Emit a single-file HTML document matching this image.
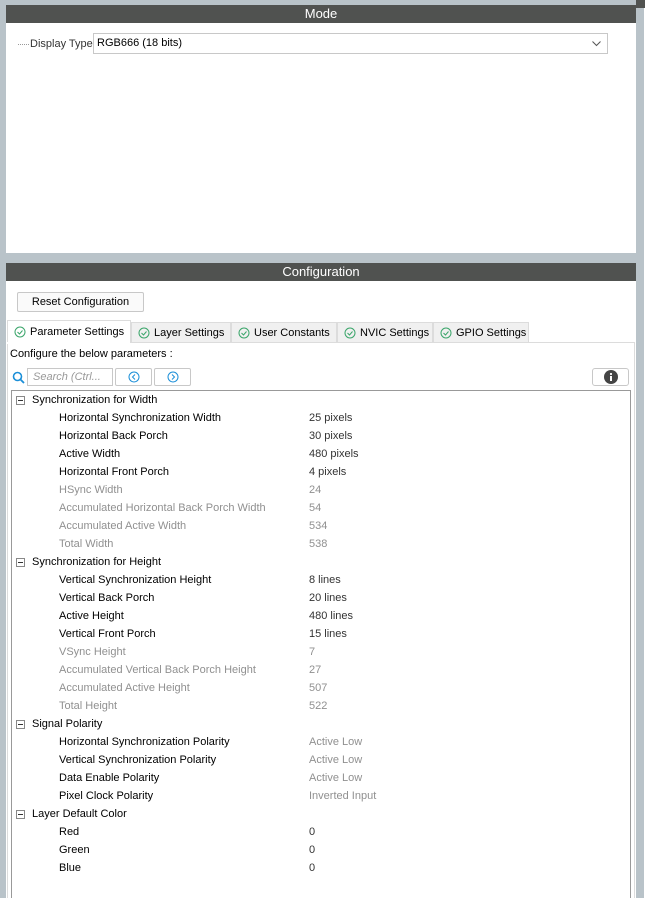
<!DOCTYPE html>
<html><head><meta charset="utf-8"><style>
*{margin:0;padding:0;box-sizing:border-box}
body{width:655px;height:898px;background:#fff;position:relative;overflow:hidden;font-family:"Liberation Sans",sans-serif;font-size:11px;color:#000}
.a{position:absolute}
.hdr{background:#505250;color:#fff;font-size:13px;text-align:center;line-height:18px}
.row{position:absolute;left:0;height:18px;line-height:18px;white-space:nowrap}
.g{color:#909090}
.v{color:#333}
.tab{position:absolute;top:322px;height:20px;line-height:20px;background:#f0f0f0;border:1px solid #dcdcdc;border-bottom:none;padding-left:22px;font-size:11px;white-space:nowrap;overflow:hidden}
.tab svg{position:absolute;left:6px;top:4px}
</style></head><body>
<div class="a" style="left:0;top:0;width:6px;height:898px;background:#b9c3c9"></div>
<div class="a" style="left:636px;top:0;width:8px;height:898px;background:#b9c3c9"></div>
<div class="a" style="left:6px;top:0;width:630px;height:5px;background:#b9c3c9"></div>
<div class="a" style="left:636px;top:0;width:9px;height:8px;background:#505250"></div>
<div class="a hdr" style="left:6px;top:5px;width:630px;height:18px">Mode</div>
<div class="a" style="left:18px;top:44px;width:11px;border-top:1px dotted #999"></div>
<div class="a" style="left:30px;top:37px;line-height:14px;color:#333">Display Type</div>
<div class="a" style="left:93px;top:33px;width:515px;height:21px;border:1px solid #c8c8c8;line-height:19px;padding-left:3px">RGB666 (18 bits)
<svg class="a" style="right:6px;top:7px" width="9" height="6"><path d="M0.5 0.5L4.5 4.5L8.5 0.5" fill="none" stroke="#555"/></svg></div>
<div class="a" style="left:6px;top:253px;width:630px;height:10px;background:#b9c3c9"></div>
<div class="a hdr" style="left:6px;top:263px;width:630px;height:18px">Configuration</div>
<div class="a" style="left:17px;top:292px;width:127px;height:20px;border:1px solid #c8c8c8;border-radius:2px;background:#fafafa;text-align:center;line-height:18px">Reset Configuration</div>
<div class="tab" style="left:7px;top:320px;height:23px;width:124px;background:#fff;line-height:22px">
<svg width="12" height="12" style="top:5px"><circle cx="6" cy="6" r="5" fill="none" stroke="#3aa56a"/><path d="M3.5 6L5.5 8L8.5 4.5" fill="none" stroke="#3aa56a"/></svg>Parameter Settings</div>
<div class="tab" style="left:131px;width:100px"><svg width="12" height="12"><circle cx="6" cy="6" r="5" fill="none" stroke="#3aa56a"/><path d="M3.5 6L5.5 8L8.5 4.5" fill="none" stroke="#3aa56a"/></svg>Layer Settings</div>
<div class="tab" style="left:231px;width:106px"><svg width="12" height="12"><circle cx="6" cy="6" r="5" fill="none" stroke="#3aa56a"/><path d="M3.5 6L5.5 8L8.5 4.5" fill="none" stroke="#3aa56a"/></svg>User Constants</div>
<div class="tab" style="left:337px;width:96px"><svg width="12" height="12"><circle cx="6" cy="6" r="5" fill="none" stroke="#3aa56a"/><path d="M3.5 6L5.5 8L8.5 4.5" fill="none" stroke="#3aa56a"/></svg>NVIC Settings</div>
<div class="tab" style="left:433px;width:96px"><svg width="12" height="12"><circle cx="6" cy="6" r="5" fill="none" stroke="#3aa56a"/><path d="M3.5 6L5.5 8L8.5 4.5" fill="none" stroke="#3aa56a"/></svg>GPIO Settings</div>
<div class="a" style="left:7px;top:342px;width:628px;height:556px;border:1px solid #dcdcdc;border-bottom:none"></div>
<div class="a" style="left:7px;top:342px;width:123px;height:2px;background:#fff"></div>
<div class="a" style="left:10px;top:348px;font-size:11px">Configure the below parameters :</div>
<svg class="a" style="left:12px;top:371px" width="13" height="13"><circle cx="5.5" cy="5.5" r="4" fill="none" stroke="#1b8fd8" stroke-width="1.6"/><path d="M8.5 8.5L12 12" stroke="#1b8fd8" stroke-width="1.8"/></svg>
<div class="a" style="left:27px;top:368px;width:86px;height:18px;border:1px solid #c8c8c8;color:#999;font-style:italic;padding-left:5px;line-height:16px">Search (Ctrl...</div>
<div class="a" style="left:115px;top:368px;width:37px;height:18px;border:1px solid #c8c8c8;border-radius:2px"><svg class="a" style="left:12px;top:2px" width="12" height="12"><circle cx="6" cy="6" r="5" fill="none" stroke="#1b8fd8"/><path d="M7 3.5L4.5 6L7 8.5" fill="none" stroke="#1b8fd8"/></svg></div>
<div class="a" style="left:154px;top:368px;width:37px;height:18px;border:1px solid #c8c8c8;border-radius:2px"><svg class="a" style="left:12px;top:2px" width="12" height="12"><circle cx="6" cy="6" r="5" fill="none" stroke="#1b8fd8"/><path d="M5 3.5L7.5 6L5 8.5" fill="none" stroke="#1b8fd8"/></svg></div>
<div class="a" style="left:592px;top:368px;width:37px;height:18px;border:1px solid #c8c8c8;border-radius:3px"><svg class="a" style="left:11px;top:1px" width="14" height="14"><circle cx="7" cy="7" r="7" fill="#444"/><rect x="6" y="6" width="2" height="5" fill="#fff"/><circle cx="7" cy="4" r="1.1" fill="#fff"/></svg></div>
<div class="a" style="left:11px;top:390px;width:620px;height:508px;border:1px solid #999;border-bottom:none">
<div style="position:relative;left:-11px;top:-390px">
<div class="row" style="top:390px"><span class="a" style="left:15px;top:5px;width:9px;height:9px;border:1px solid #888"><span class="a" style="left:1px;top:3px;width:5px;border-top:1px solid #333"></span></span><span class="a" style="left:31px">Synchronization for Width</span></div>
<div class="row" style="top:408px"><span class="a" style="left:58px">Horizontal Synchronization Width</span><span class="a v" style="left:308px">25 pixels</span></div>
<div class="row" style="top:426px"><span class="a" style="left:58px">Horizontal Back Porch</span><span class="a v" style="left:308px">30 pixels</span></div>
<div class="row" style="top:444px"><span class="a" style="left:58px">Active Width</span><span class="a v" style="left:308px">480 pixels</span></div>
<div class="row" style="top:462px"><span class="a" style="left:58px">Horizontal Front Porch</span><span class="a v" style="left:308px">4 pixels</span></div>
<div class="row g" style="top:480px"><span class="a" style="left:58px">HSync Width</span><span class="a" style="left:308px">24</span></div>
<div class="row g" style="top:498px"><span class="a" style="left:58px">Accumulated Horizontal Back Porch Width</span><span class="a" style="left:308px">54</span></div>
<div class="row g" style="top:516px"><span class="a" style="left:58px">Accumulated Active Width</span><span class="a" style="left:308px">534</span></div>
<div class="row g" style="top:534px"><span class="a" style="left:58px">Total Width</span><span class="a" style="left:308px">538</span></div>
<div class="row" style="top:552px"><span class="a" style="left:15px;top:5px;width:9px;height:9px;border:1px solid #888"><span class="a" style="left:1px;top:3px;width:5px;border-top:1px solid #333"></span></span><span class="a" style="left:31px">Synchronization for Height</span></div>
<div class="row" style="top:570px"><span class="a" style="left:58px">Vertical Synchronization Height</span><span class="a v" style="left:308px">8 lines</span></div>
<div class="row" style="top:588px"><span class="a" style="left:58px">Vertical Back Porch</span><span class="a v" style="left:308px">20 lines</span></div>
<div class="row" style="top:606px"><span class="a" style="left:58px">Active Height</span><span class="a v" style="left:308px">480 lines</span></div>
<div class="row" style="top:624px"><span class="a" style="left:58px">Vertical Front Porch</span><span class="a v" style="left:308px">15 lines</span></div>
<div class="row g" style="top:642px"><span class="a" style="left:58px">VSync Height</span><span class="a" style="left:308px">7</span></div>
<div class="row g" style="top:660px"><span class="a" style="left:58px">Accumulated Vertical Back Porch Height</span><span class="a" style="left:308px">27</span></div>
<div class="row g" style="top:678px"><span class="a" style="left:58px">Accumulated Active Height</span><span class="a" style="left:308px">507</span></div>
<div class="row g" style="top:696px"><span class="a" style="left:58px">Total Height</span><span class="a" style="left:308px">522</span></div>
<div class="row" style="top:714px"><span class="a" style="left:15px;top:5px;width:9px;height:9px;border:1px solid #888"><span class="a" style="left:1px;top:3px;width:5px;border-top:1px solid #333"></span></span><span class="a" style="left:31px">Signal Polarity</span></div>
<div class="row" style="top:732px"><span class="a" style="left:58px">Horizontal Synchronization Polarity</span><span class="a g" style="left:308px">Active Low</span></div>
<div class="row" style="top:750px"><span class="a" style="left:58px">Vertical Synchronization Polarity</span><span class="a g" style="left:308px">Active Low</span></div>
<div class="row" style="top:768px"><span class="a" style="left:58px">Data Enable Polarity</span><span class="a g" style="left:308px">Active Low</span></div>
<div class="row" style="top:786px"><span class="a" style="left:58px">Pixel Clock Polarity</span><span class="a g" style="left:308px">Inverted Input</span></div>
<div class="row" style="top:804px"><span class="a" style="left:15px;top:5px;width:9px;height:9px;border:1px solid #888"><span class="a" style="left:1px;top:3px;width:5px;border-top:1px solid #333"></span></span><span class="a" style="left:31px">Layer Default Color</span></div>
<div class="row" style="top:822px"><span class="a" style="left:58px">Red</span><span class="a v" style="left:308px">0</span></div>
<div class="row" style="top:840px"><span class="a" style="left:58px">Green</span><span class="a v" style="left:308px">0</span></div>
<div class="row" style="top:858px"><span class="a" style="left:58px">Blue</span><span class="a v" style="left:308px">0</span></div>
</div></div>
</body></html>
